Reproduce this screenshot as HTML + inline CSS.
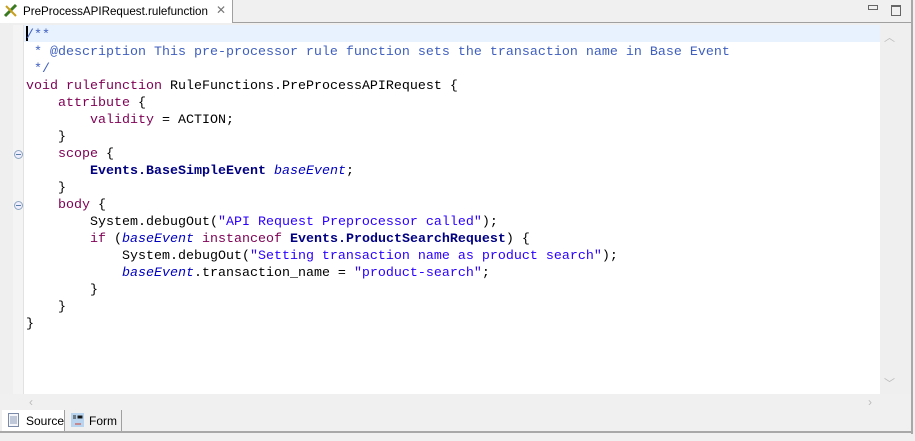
<!DOCTYPE html>
<html><head><style>
body{margin:0;width:915px;height:441px;background:#f0f0f0;position:relative;overflow:hidden;font-family:"Liberation Sans",sans-serif}
.tabbar{position:absolute;left:0;top:0;width:911px;height:22px;background:#f0f0f0;border-bottom:1px solid #a0a0a0}
.tab{position:absolute;left:0;top:0;width:232px;height:23px;background:#fff;border-right:1px solid #a0a0a0;font-size:11.6px}
.editor{position:absolute;left:0;top:23px;width:911px;height:371px;background:#efefef}
.gut{position:absolute;left:13px;top:2px;width:10px;height:369px;background:#f4f4f4;border-right:1px solid #e2e2e2}
.code{position:absolute;left:24px;top:2px;width:856px;height:369px;background:#fff}
.vs{position:absolute;left:880px;top:2px;width:28px;height:369px;background:#efefef}
pre{margin:0;position:absolute;left:26px;top:27px;font-family:"Liberation Mono",monospace;font-size:13.33px;line-height:17px;color:#000}
.hl{position:absolute;left:24px;top:25px;width:856px;height:17px;background:#e8f2fe}
.c{color:#3f5fbf}.k{color:#7f0055}.s{color:#2a00ff}.t{color:#000080;font-weight:bold}.v{color:#0000c0;font-style:italic}
.fold{position:absolute;left:14px;width:7px;height:7px;border:1px solid #8ea6c0;border-radius:50%;background:#eef}
.fold:after{content:"";position:absolute;left:1px;top:3px;width:5px;height:1px;background:#5a7da8}
.bottom{position:absolute;left:0;top:410px;width:911px;height:21px;border-bottom:2px solid #a8a8a8;background:#f0f0f0}
</style></head><body>
<div class="tabbar">
<div class="tab">
<svg style="position:absolute;left:3px;top:3px" width="16" height="16"><path d="M2 13L13 2" stroke="#3a7a20" stroke-width="3"/><path d="M3 3L13 13" stroke="#c8a020" stroke-width="2"/></svg>
<span style="position:absolute;left:23px;top:5px;color:#000">PreProcessAPIRequest.rulefunction</span>
<span style="position:absolute;left:216px;top:3px;color:#777;font-size:12px">✕</span>
</div>
<div style="position:absolute;left:868px;top:5px;width:8px;height:3px;border:1px solid #666"></div>
<div style="position:absolute;left:891px;top:5px;width:8px;height:8px;border:1px solid #666;border-top-width:2px"></div>
</div>
<div class="editor"><div class="gut"></div><div class="code"></div><div class="vs"><span style="position:absolute;left:4px;top:4px;color:#bbb;font-size:11px">︿</span><span style="position:absolute;left:4px;top:350px;color:#bbb;font-size:11px">﹀</span></div></div>
<div class="hl"></div>
<div style="position:absolute;left:26px;top:26px;width:2px;height:15px;background:#000"></div>
<div class="fold" style="top:150px"></div>
<div class="fold" style="top:201px"></div>
<pre><span class="c">/**
 * @description This pre-processor rule function sets the transaction name in Base Event
 */</span>
<span class="k">void rulefunction</span> RuleFunctions.PreProcessAPIRequest {
    <span class="k">attribute</span> {
        <span class="k">validity</span> = ACTION;
    }
    <span class="k">scope</span> {
        <span class="t">Events.BaseSimpleEvent</span> <span class="v">baseEvent</span>;
    }
    <span class="k">body</span> {
        System.debugOut(<span class="s">"API Request Preprocessor called"</span>);
        <span class="k">if</span> (<span class="v">baseEvent</span> <span class="k">instanceof</span> <span class="t">Events.ProductSearchRequest</span>) {
            System.debugOut(<span class="s">"Setting transaction name as product search"</span>);
            <span class="v">baseEvent</span>.transaction_name = <span class="s">"product-search"</span>;
        }
    }
}</pre>
<div style="position:absolute;left:29px;top:395px;color:#bbb;font-size:12px">‹</div>
<div style="position:absolute;left:868px;top:395px;color:#bbb;font-size:12px">›</div>
<div class="bottom">
<div style="position:absolute;left:2px;top:0;width:62px;height:21px;background:#fff;border-right:1px solid #a0a0a0">
<svg style="position:absolute;left:6px;top:3px" width="12" height="15"><rect x="0.5" y="0.5" width="10" height="13" fill="#f4f6fa" stroke="#7a8aa8"/><path d="M2 4h7M2 6h7M2 8h7M2 10h7" stroke="#8a9ab8"/></svg>
<span style="position:absolute;left:24px;top:4px;font-size:12px">Source</span></div>
<div style="position:absolute;left:65px;top:0;width:56px;height:21px;border-right:1px solid #a0a0a0">
<svg style="position:absolute;left:6px;top:3px" width="13" height="14"><rect x="0" y="0" width="13" height="14" fill="#b8d4ee"/><path d="M2 3h3M2 5h3M7 3h4v2h-4z" stroke="#222"/><path d="M4 11h6" stroke="#d04030"/></svg>
<span style="position:absolute;left:24px;top:4px;font-size:12px">Form</span></div>
</div>
<div style="position:absolute;left:911px;top:0;width:2px;height:434px;background:#a8a8a8"></div>
</body></html>
